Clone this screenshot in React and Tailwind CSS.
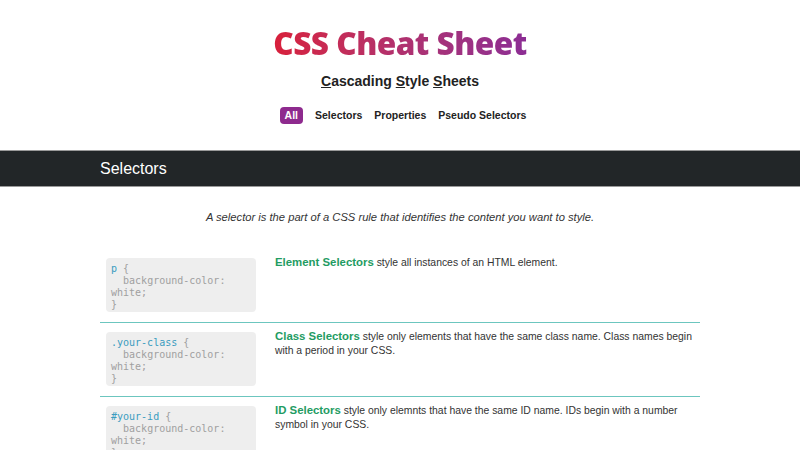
import React from "react";

const rows = [
  {
    sel: "p",
    title: "Element Selectors",
    text: "style all instances of an HTML element.",
  },
  {
    sel: ".your-class",
    title: "Class Selectors",
    text: "style only elements that have the same class name. Class names begin with a period in your CSS.",
  },
  {
    sel: "#your-id",
    title: "ID Selectors",
    text: "style only elemnts that have the same ID name. IDs begin with a number symbol in your CSS.",
  },
];

const CodeBlock = ({ sel }) => (
  <pre className="h-[54px] w-[150px] shrink-0 overflow-hidden rounded bg-[#eeeeee] px-[5px] pt-[5px] font-['DejaVu_Sans_Mono',monospace] text-[10px] leading-[12px] text-[#a0a0a0] whitespace-pre-wrap">
    <span className="text-[#3a9cc0]">{sel}</span> {"{"}
    {"\n  background-color:\nwhite;\n}"}
  </pre>
);

export default function App() {
  return (
    <div className="min-h-screen bg-white font-['Liberation_Sans',Arial,sans-serif] text-[#222]">
      <header className="flex flex-col items-center pt-[23px]">
        <h1 className="bg-gradient-to-r from-[#d81f3a] to-[#8c2d94] bg-clip-text font-['Open_Sans',sans-serif] text-[31.5px] leading-[40px] font-extrabold tracking-[-0.5px] text-transparent">
          CSS Cheat Sheet
        </h1>
        <p className="mt-[9px] text-[14px] leading-[18px] font-bold text-[#222]">
          <span className="underline">C</span>ascading <span className="underline">S</span>tyle{" "}
          <span className="underline">S</span>heets
        </p>
        <nav className="mt-[17px] ml-[6px] flex items-center gap-[12px] text-[10.5px] leading-[13px] font-bold">
          <span className="rounded-sm bg-[#8e2a8e] px-[5px] py-[2px] text-white">All</span>
          <span>Selectors</span>
          <span>Properties</span>
          <span>Pseudo Selectors</span>
        </nav>
      </header>

      <section className="mt-[26px] border-y border-[#9a9a9a] bg-[#222628]">
        <h2 className="mx-auto w-[600px] py-[8px] text-[16px] leading-[19px] text-white">Selectors</h2>
      </section>

      <main className="mx-auto w-[600px]">
        <p className="mt-[23px] text-center text-[11.2px] leading-[14px] italic text-[#333]">
          A selector is the part of a CSS rule that identifies the content you want to style.
        </p>
        <div className="mt-[24px]">
          {rows.map((r) => (
            <div
              key={r.sel}
              className="flex h-[74px] items-start gap-[19px] border-b border-[#6cc6bf] px-[6px] pt-[9px] first:h-[75px] first:pt-[10px]"
            >
              <CodeBlock sel={r.sel} />
              <p className="-mt-[3px] text-[10.4px] leading-[14px] text-[#333]">
                <span className="text-[11.4px] font-bold text-[#1f9c63]">{r.title}</span> {r.text}
              </p>
            </div>
          ))}
        </div>
      </main>
    </div>
  );
}
